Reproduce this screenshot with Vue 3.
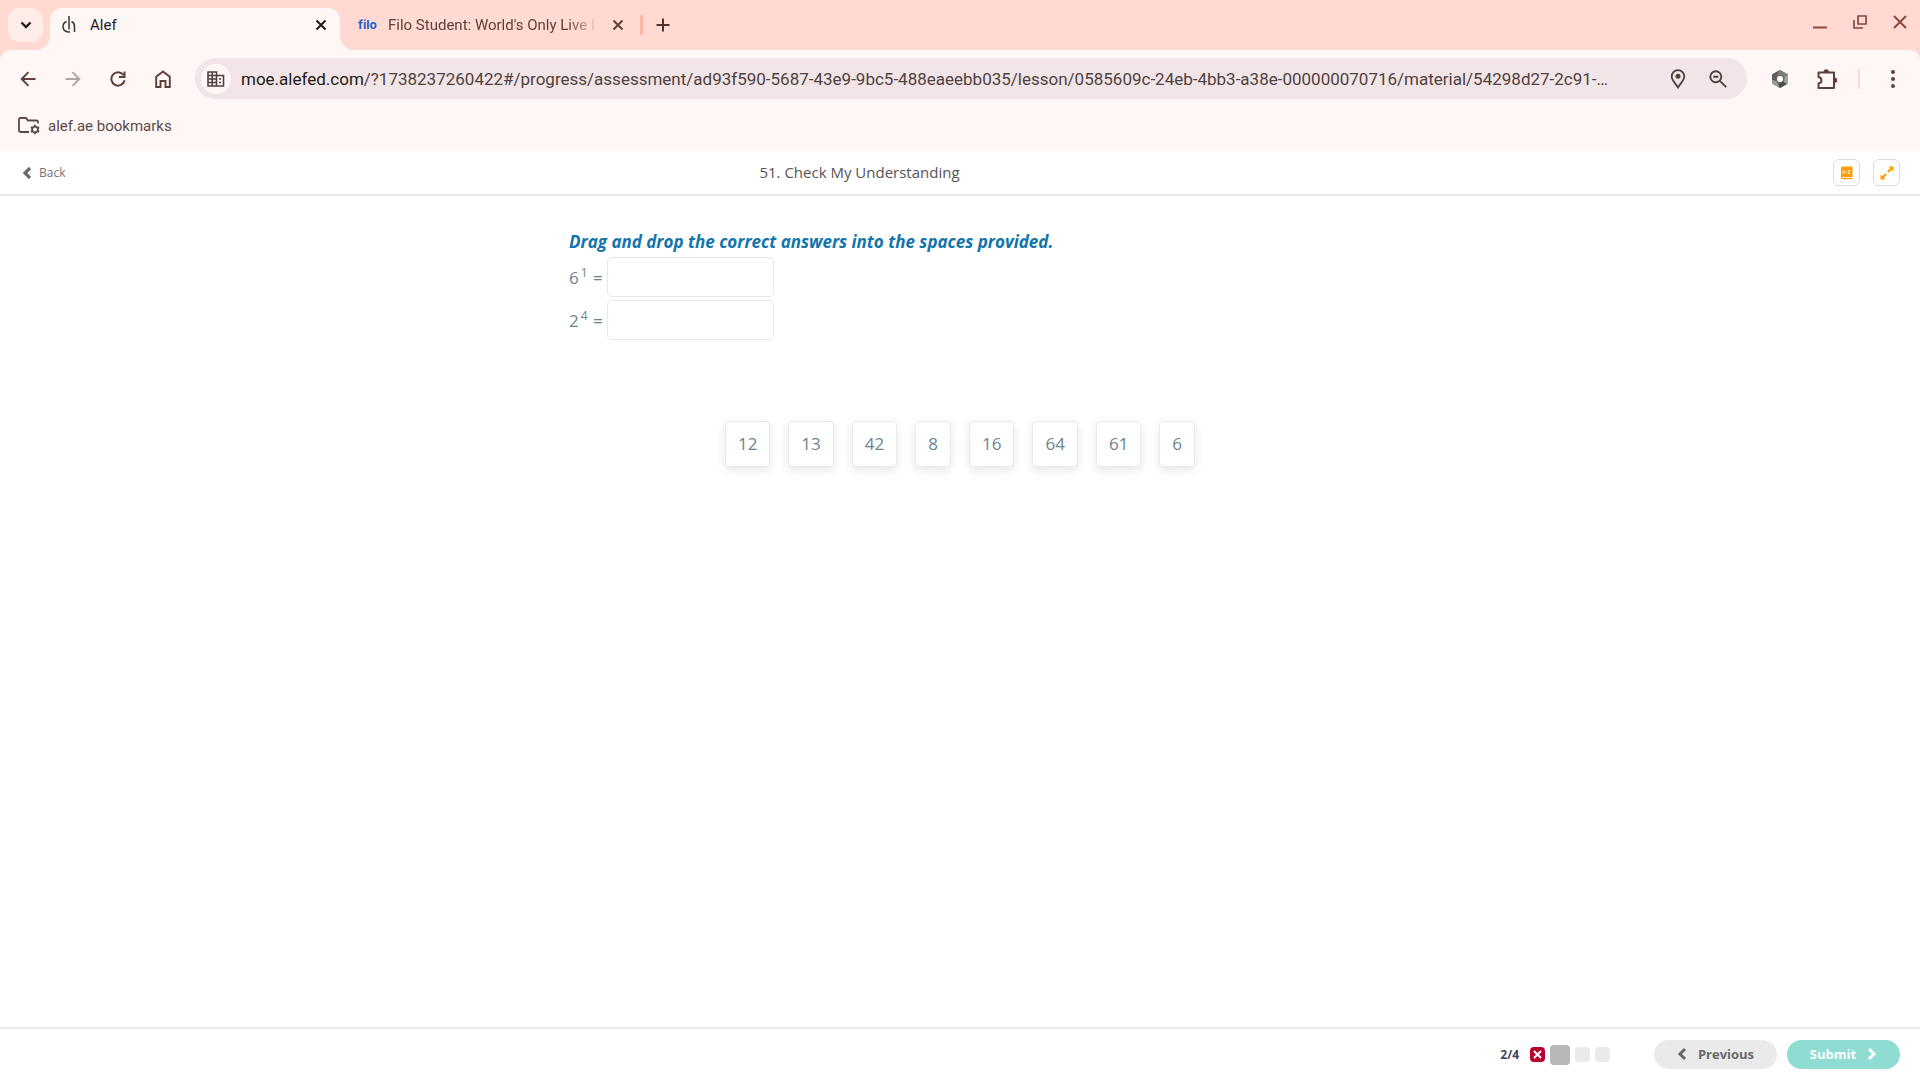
<script setup>
import { ref } from 'vue'

const path = ref('/?1738237260422#/progress/assessment/ad93f590-5687-43e9-9bc5-488eaeebb035/lesson/0585609c-24eb-4bb3-a38e-000000070716/material/54298d27-2c91-…')
const equations = ref([
  { base: '6', exponent: '1', answer: '' },
  { base: '2', exponent: '4', answer: '' },
])
const options = ['12', '13', '42', '8', '16', '64', '61', '6']
</script>

<template>
  <div class="page">
    <header class="browser">
      <div class="tabstrip">
        <button class="tab-search" aria-label="Search tabs">
          <svg width="12" height="8" viewBox="0 0 12 8"><path d="M1.500 1.500 6 6l4.500-4.500" fill="none" stroke="#231917" stroke-width="2.400" /></svg>
        </button>
        <div class="tab active">
          <svg class="favicon" width="16" height="20" viewBox="0 0 16 20" fill="none" stroke="#3a3535" stroke-width="1.500">
            <path d="M7 1v13.500M4.500 6.500C2.300 7.500 1 9.300 1 11.600c0 3 2 5 5 5.300h2" />
            <path d="M9.500 6.500c2 .8 3 2.700 3 5v5.500" />
          </svg>
          <span class="tab-title">Alef</span>
          <button class="tab-close" aria-label="Close Alef">
            <svg width="12" height="12" viewBox="0 0 12 12"><path d="m1.500 1.500 9 9m0-9-9 9" stroke="#231917" stroke-width="2" /></svg>
          </button>
        </div>
        <div class="tab inactive">
          <span class="filo">filo</span>
          <span class="tab-title faded">Filo Student: World's Only Live I</span>
          <button class="tab-close" aria-label="Close Filo Student">
            <svg width="12" height="12" viewBox="0 0 12 12"><path d="m1.500 1.500 9 9m0-9-9 9" stroke="#5d4039" stroke-width="2" /></svg>
          </button>
        </div>
        <i class="tab-divider"></i>
        <button class="new-tab" aria-label="New tab">
          <svg width="14" height="14" viewBox="0 0 14 14"><path d="M7 .5v13M.5 7h13" stroke="#4b322c" stroke-width="2" /></svg>
        </button>
        <div class="window-controls">
          <button aria-label="Minimize">
            <svg width="16" height="16" viewBox="0 0 16 16"><path d="M1 13.500h14" stroke="#8f4538" stroke-width="2" /></svg>
          </button>
          <button aria-label="Restore">
            <svg width="16" height="16" viewBox="0 0 16 16" fill="none" stroke="#8f4538" stroke-width="1.700"><path d="M6 2h8v8H6zM2 6v8h9" /></svg>
          </button>
          <button aria-label="Close window">
            <svg width="16" height="16" viewBox="0 0 16 16"><path d="m2 2 12 12m0-12L2 14" stroke="#8f4538" stroke-width="1.900" /></svg>
          </button>
        </div>
      </div>

      <div class="toolbar">
        <nav class="nav">
          <button aria-label="Back one page">
            <svg width="16" height="16" viewBox="0 0 16 16" fill="none" stroke="#5d4039" stroke-width="1.900"><path d="M15.500 8H2M8.500 1.200 1.700 8l6.800 6.800" /></svg>
          </button>
          <button aria-label="Forward one page">
            <svg width="16" height="16" viewBox="0 0 16 16" fill="none" stroke="#b3a3a0" stroke-width="1.900"><path d="M.5 8H14M7.500 1.200 14.300 8l-6.800 6.800" /></svg>
          </button>
          <button aria-label="Reload">
            <svg width="16" height="16" viewBox="0 0 16 16" fill="none" stroke="#5d4039" stroke-width="2"><path d="M13.500 4A6.700 6.700 0 1 0 14.600 9.300M14.500.5v5.500H9" /></svg>
          </button>
          <button aria-label="Home">
            <svg width="16" height="18" viewBox="0 0 16 18" fill="none" stroke="#5d4039" stroke-width="1.900"><path d="M1.200 6.800 8 1.400l6.800 5.400V17h-4.300v-6h-5v6H1.200z" /></svg>
          </button>
        </nav>
        <div class="omnibox">
          <button class="site-info" aria-label="Site information">
            <svg width="18" height="16" viewBox="0 0 18 16"><path d="M1 1h8.500v14H1zM9.500 4.500h7V15h-7M1 4.500h8.500M1 8h8.500M1 11.500h8.500M5.200 1v14M12 8h2M12 11.500h2" fill="none" stroke="#4e4140" stroke-width="1.600" /></svg>
          </button>
          <label class="host" for="address">moe.alefed.com</label>
          <input id="address" v-model="path" class="address" type="text" spellcheck="false" />
          <button class="omni-action" aria-label="Location">
            <svg width="16" height="20" viewBox="0 0 16 20"><path d="M8 1.200c-3.700 0-6.300 2.800-6.300 6.200C1.700 11 5.500 14.300 8 18.500c2.500-4.200 6.300-7.500 6.300-11.100 0-3.400-2.600-6.200-6.300-6.200z" fill="none" stroke="#51413f" stroke-width="1.800" /><circle cx="8" cy="7.300" r="2.500" fill="#51413f" /></svg>
          </button>
          <button class="omni-action" aria-label="Zoom">
            <svg width="18" height="18" viewBox="0 0 18 18" fill="none" stroke="#51413f" stroke-width="1.900"><circle cx="6.800" cy="6.800" r="5.500" /><path d="m10.800 10.800 6.400 6.400M4.300 6.800h5" /></svg>
          </button>
        </div>
        <div class="extensions">
          <button aria-label="Extension">
            <svg width="18" height="20" viewBox="0 0 18 20">
              <path d="M9 1 17 5.500v9L9 19l-8-4.500v-9z" fill="#6a6a6a" />
              <path d="m9 1 8 4.500v5L9 5.500 5 8z" fill="#7c7c7c" />
              <path d="M17 6v8.500l-4 2.300L13.500 8z" fill="#a3a3a3" />
              <path d="m16 15-7 4-4-2.500 7-3.500z" fill="#4c4c4c" />
              <path d="m9 19-8-4.500V9l5 4z" fill="#9a9a9a" />
              <path d="M1 11V5.500L8 1.500 5.500 7v5z" fill="#5c5c5c" />
              <circle cx="9" cy="10" r="3" fill="#fff" />
            </svg>
          </button>
          <button aria-label="Extensions">
            <svg width="22" height="22" viewBox="0 0 22 22"><path d="M2.500 4.500H18V20H2.500v-4.500c4-.5 4-6 0-6.500z" fill="none" stroke="#5d4039" stroke-width="2" stroke-linejoin="round" /><path d="M7.500 4a2.700 2.700 0 0 1 5.400 0zM18.500 9.500a2.700 2.700 0 0 1 0 5.400z" fill="#5d4039" /></svg>
          </button>
          <i class="toolbar-divider"></i>
          <button aria-label="Menu">
            <svg width="6" height="20" viewBox="0 0 6 20" fill="#5d4039"><circle cx="3" cy="3" r="2" /><circle cx="3" cy="10" r="2" /><circle cx="3" cy="17" r="2" /></svg>
          </button>
        </div>
      </div>

      <div class="bookmarks">
        <a href="#" class="bookmark">
          <svg width="22" height="18" viewBox="0 0 22 18" fill="none" stroke="#5a4a48" stroke-width="1.800"><path d="M11 15H2.500Q1 15 1 13.500V2.500Q1 1 2.500 1H8l2 2.500h8.500Q20 3.500 20 5v1.500" /><circle cx="17" cy="12.500" r="2.900" /><path d="M17 7.700v2M17 15.300v2M12.900 10.100l1.700 1M19.400 13.900l1.700 1M12.900 14.900l1.700-1M19.400 11.100l1.700-1" /></svg>
          alef.ae bookmarks
        </a>
      </div>
    </header>

    <header class="lesson-header">
      <a href="#" class="back">
        <svg width="10" height="14" viewBox="0 0 10 14"><path d="M8 2 3 7l5 5" fill="none" stroke="#6b6b6b" stroke-width="3.200" /></svg>
        Back
      </a>
      <h1>51. Check My Understanding</h1>
      <div class="tools">
        <button aria-label="Glossary">
          <svg width="14" height="14" viewBox="0 0 14 14"><path d="M2.500.5h10v12.800h-10Q1 13.300 1 12V2Q1 .5 2.500.5z" fill="#ff9f05" /><path d="M2 11.500h10.500M2.500 7.500l1-3 1 3M5.500 6h1.500M8 4.500h2l-2 3h2" fill="none" stroke="#fff" stroke-width=".8" /></svg>
        </button>
        <button aria-label="Full screen">
          <svg width="14" height="14" viewBox="0 0 14 14"><path d="M8.500 .5h5V5.500zM.5 8.500v5H5.500z" fill="#ff9f05" /><path d="m12 2-4 4M2 12l4-4" stroke="#ff9f05" stroke-width="2.400" /></svg>
        </button>
      </div>
    </header>

    <main>
      <h2>Drag and drop the correct answers into the spaces provided.</h2>
      <div v-for="(item, i) in equations" :key="i" class="equation">
        <label :for="'answer-' + i">{{ item.base }}<sup>{{ item.exponent }}</sup> =</label>
        <input :id="'answer-' + i" v-model="item.answer" class="drop" type="text" readonly />
      </div>
      <div class="options">
        <button v-for="option in options" :key="option" class="option" draggable="true">{{ option }}</button>
      </div>
    </main>

    <footer>
      <span class="count">2/4</span>
      <div class="steps">
        <i class="step wrong"><svg width="9" height="9" viewBox="0 0 9 9"><path d="m1 1 7 7m0-7L1 8" stroke="#fff" stroke-width="2" /></svg></i>
        <i class="step current"></i>
        <i class="step"></i>
        <i class="step"></i>
      </div>
      <button class="pill previous">
        <svg width="10" height="14" viewBox="0 0 10 14"><path d="M8 2 3 7l5 5" fill="none" stroke="#696969" stroke-width="3" /></svg>
        Previous
      </button>
      <button class="pill submit">
        Submit
        <svg width="10" height="14" viewBox="0 0 10 14"><path d="m2 2 5 5-5 5" fill="none" stroke="#fff" stroke-width="3" /></svg>
      </button>
    </footer>
  </div>
</template>

<style>
body { margin: 0; background: #fff; }
</style>

<style scoped>
* { box-sizing: border-box; }
button { display: inline-flex; align-items: center; justify-content: center; padding: 0; border: 0; background: none; font: inherit; color: inherit; }
svg { display: block; flex: none; }
.page { display: flex; flex-direction: column; min-height: 100vh; font-family: "Open Sans", "Noto Sans", sans-serif; }
.browser { font-family: Roboto, sans-serif; background: #ffd9d2; }
.tabstrip { display: flex; align-items: center; height: 50px; padding: 0 8px; color: #5d4039; font-size: 15px; }
.tab-search { width: 35px; height: 34px; border-radius: 12px; background: #ffede9; }
.tab { position: relative; display: flex; align-items: center; width: 290px; height: 42px; margin-top: 8px; padding: 0 11px 8px 18px; }
.tab.active { margin-left: 7px; padding-left: 12px; border-radius: 12px 12px 0 0; background: #fff7f5; color: #231917; }
.tab.inactive { padding-right: 4px; }
.tab.active::before, .tab.active::after { content: ""; position: absolute; bottom: 0; width: 14px; height: 14px; }
.tab.active::before { right: 100%; background: radial-gradient(circle at 0 0, transparent 14px, #fff7f5 14px); }
.tab.active::after { left: 100%; background: radial-gradient(circle at 100% 0, transparent 14px, #fff7f5 14px); }
.favicon { margin-right: 12px; }
.tab-title { flex: 1; height: 20px; line-height: 20px; white-space: nowrap; }
.faded { -webkit-mask-image: linear-gradient(90deg, #000 180px, transparent 210px); mask-image: linear-gradient(90deg, #000 180px, transparent 210px); }
.filo { width: 30px; color: #1f5fd0; font: 700 12px/20px Inter, sans-serif; }
.tab-close { width: 16px; height: 16px; }
.tab-divider { width: 3px; height: 20px; margin-left: 10px; border-radius: 2px; background: #ffb4a5; }
.new-tab { width: 40px; height: 34px; }
.window-controls { display: flex; gap: 24px; margin-left: auto; padding: 0 4px 6px 0; }
.window-controls button { width: 16px; height: 16px; }
.toolbar { display: flex; align-items: center; height: 57px; padding: 0 24px 0 20px; border-radius: 10px 10px 0 0; background: #fff7f5; }
.nav { display: flex; gap: 29px; width: 175px; }
.nav button { width: 16px; height: 20px; }
.omnibox { display: flex; flex: 1; align-items: center; height: 41px; padding: 0 20px 0 6px; border-radius: 21px; background: #f1e5e7; font-size: 17px; line-height: 24px; }
.site-info { width: 30px; height: 30px; margin-right: 10px; border-radius: 50%; background: #fff7f5; }
.host { color: #231917; }
.address { flex: 1; min-width: 0; padding: 0; border: 0; outline: 0; background: none; font: inherit; color: #51413f; }
.omni-action { width: 18px; height: 24px; margin-left: 22px; }
.extensions { display: flex; align-items: center; margin-left: 24px; }
.extensions button:nth-child(2) { margin-left: 27px; }
.toolbar-divider { width: 2px; height: 20px; margin: 0 30px 0 20px; background: #ffd9d2; }
.bookmarks { display: flex; align-items: center; height: 44px; padding: 0 18px 6px; background: #fff7f5; }
.bookmark { display: flex; align-items: center; gap: 8px; color: #5a4a48; font-size: 15px; line-height: 20px; text-decoration: none; }
.lesson-header { display: grid; grid-template-columns: 1fr auto 1fr 201px; align-items: center; height: 45px; border-bottom: 2px solid #eaeaea; }
.back { display: flex; align-items: center; gap: 7px; padding-left: 22px; color: #757575; font-size: 12px; text-decoration: none; }
h1 { margin: 0; padding-bottom: 2px; font-size: 15px; font-weight: 400; line-height: 24px; color: #555; }
.tools { display: flex; grid-column: 4; justify-content: flex-end; gap: 13px; padding-right: 20px; }
.tools button { width: 27px; height: 27px; border: 1px solid #dcdcdc; border-radius: 6px; }
main { flex: 1; width: 100%; max-width: 782px; margin: 0 auto; padding-top: 34px; font-size: 17px; color: #6c858d; }
h2 { margin: 0 0 3px; font-size: 17px; font-style: italic; font-weight: 700; line-height: 24px; color: #1374ac; white-space: nowrap; }
.equation { display: flex; align-items: center; height: 40px; margin-bottom: 3px; }
.equation label { width: 38px; white-space: nowrap; }
sup { margin: 0 1px 0 2px; font-size: 12px; line-height: 0; }
.drop { width: 167px; height: 40px; border: 1px solid #e8e8e8; border-radius: 5px; background: #fff; outline: 0; }
.options { display: flex; justify-content: center; gap: 18px; margin-top: 81px; }
.option { height: 46px; padding: 0 12px 2px; border: 1px solid #eaeaea; border-radius: 4px; background: #fff; box-shadow: 0 3px 10px rgb(0 0 0 / 10%); }
footer { display: flex; align-items: center; justify-content: flex-end; height: 53px; padding-right: 20px; border-top: 2px solid #eaeaea; }
.count { margin-right: 11px; font-size: 12px; font-weight: 700; color: #3e4a5a; }
.steps { display: flex; align-items: center; gap: 5px; margin-right: 44px; }
.step { display: flex; align-items: center; justify-content: center; width: 15px; height: 15px; border-radius: 4px; background: #eaeaea; }
.step.wrong { background: #b8002e; }
.step.current { width: 20px; height: 20px; background: #b8b8b8; }
.pill { height: 29px; padding-bottom: 2px; border-radius: 15px; font-size: 13px; font-weight: 700; line-height: 20px; }
.previous { gap: 11px; width: 123px; background: #eaeaea; color: #696969; }
.submit { gap: 11px; width: 113px; margin-left: 10px; background: #8edcd2; color: #fff; }
</style>
